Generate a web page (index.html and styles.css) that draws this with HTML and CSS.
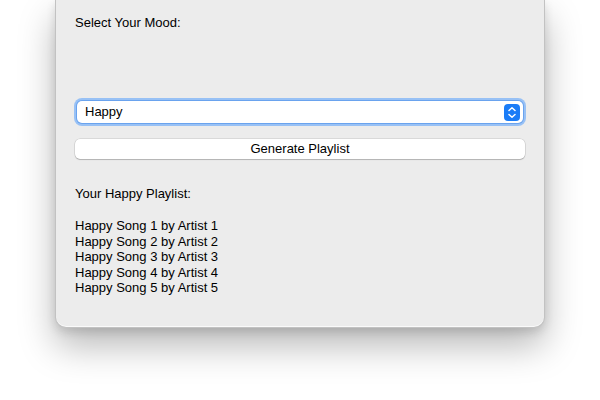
FILE: index.html
```html
<!DOCTYPE html>
<html>
<head>
<meta charset="utf-8">
<link rel="stylesheet" href="styles.css">
</head>
<body>
<div class="window">
  <div class="content">
    <label class="label">Select Your Mood:</label>
    <div class="select">
      <span class="select-value">Happy</span>
      <span class="stepper">
        <svg width="16" height="17" viewBox="0 0 16 17">
          <rect x="0" y="0" width="16" height="17" rx="4" fill="#1a7cf7"/>
          <path d="M5 6.5 L8 3.8 L11 6.5" fill="none" stroke="#fff" stroke-width="1.5" stroke-linecap="round" stroke-linejoin="round"/>
          <path d="M5 10.5 L8 13.2 L11 10.5" fill="none" stroke="#fff" stroke-width="1.5" stroke-linecap="round" stroke-linejoin="round"/>
        </svg>
      </span>
    </div>
    <div class="button">Generate Playlist</div>
    <div class="playlist-title">Your Happy Playlist:</div>
    <ul class="playlist">
      <li>Happy Song 1 by Artist 1</li>
      <li>Happy Song 2 by Artist 2</li>
      <li>Happy Song 3 by Artist 3</li>
      <li>Happy Song 4 by Artist 4</li>
      <li>Happy Song 5 by Artist 5</li>
    </ul>
  </div>
</div>
</body>
</html>
```
FILE: styles.css
```css
html, body {
  margin: 0;
  padding: 0;
  background: #ffffff;
}
body {
  font-family: "Liberation Sans", Arial, sans-serif;
  font-size: 13px;
  color: #000;
  width: 600px;
  height: 400px;
  overflow: hidden;
}
.window {
  width: 490px;
  height: 328px;
  margin-left: 55px;
  box-sizing: border-box;
  background: #ececec;
  border: 1px solid #c2c2c2;
  border-top: none;
  border-radius: 0 0 11px 11px;
  box-shadow: inset 0 -1px 0 #fafafa, 0 18px 36px rgba(0, 0, 0, 0.28), 0 4px 10px rgba(0, 0, 0, 0.12);
}
.content {
  display: flex;
  flex-direction: column;
  padding: 15px 19px 0 19px;
}
.label {
  line-height: 16px;
  height: 16px;
}
.select {
  margin-top: 70px;
  height: 22px;
  box-sizing: border-box;
  background: #fff;
  border-radius: 5px;
  box-shadow: 0 0 0 1px #6aa3ee, 0 0 0 3px #98c1f5;
  margin-left: 2px;
  margin-right: 2px;
  display: flex;
  align-items: center;
  justify-content: space-between;
  padding: 0 3px 0 8px;
}
.select-value {
  line-height: 16px;
}
.stepper {
  display: flex;
}
.button {
  margin-top: 16px;
  height: 20px;
  line-height: 20px;
  text-align: center;
  background: #fff;
  border-radius: 5px;
  box-shadow: 0 0 0 0.5px rgba(0, 0, 0, 0.16), 0 1px 1px rgba(0, 0, 0, 0.18);
}
.playlist-title {
  margin-top: 27px;
  line-height: 16px;
}
.playlist {
  list-style: none;
  margin: 16px 0 0 0;
  padding: 0;
}
.playlist li {
  line-height: 15.5px;
}
```
